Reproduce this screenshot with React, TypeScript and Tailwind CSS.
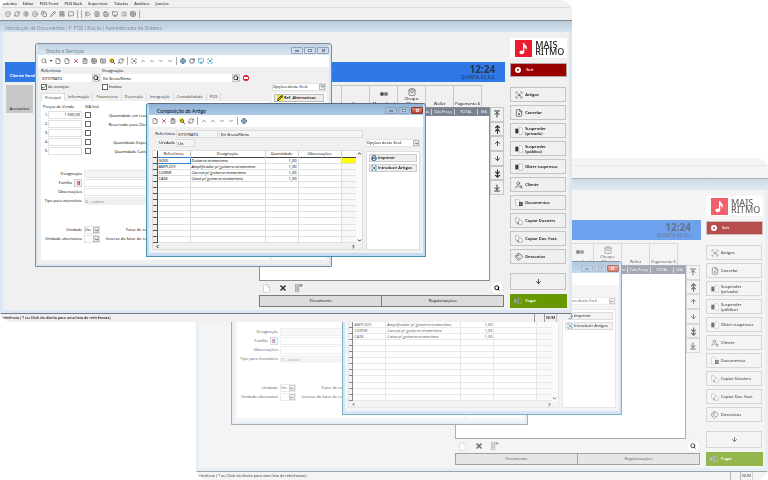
import React, { useId } from 'react';
import {
  ArrowDown, ArrowDownToLine, ArrowUp, ArrowUpToLine, CheckCircle, ChevronDown, ChevronUp, CircleDot,
  ClipboardList, Copy, FileText, File, FileX, Globe, Keyboard, LayoutGrid, MessageSquare,
  Monitor, Pencil, Printer, RefreshCw, RotateCw, Save, ScanSearch, Search, Settings, ShoppingBag,
  StepForward, Table, UserSearch, X, List, Check, Tags,
} from 'lucide-react';

type Icon = React.ElementType;

const menus = ['Sistema', 'Editar', 'POS Front', 'POS Back', 'Supervisor', 'Tabelas', 'Análises', 'Janelas'];
const mainTools: Icon[] = [CheckCircle, RefreshCw, Settings, CircleDot, Copy, Pencil, LayoutGrid, MessageSquare];
const sideTools: Icon[] = [StepForward, FileText, Save, Monitor, List, Table];

const payments = ['Numerário', 'Multibanco', 'Visa', 'MasterCard', 'Cheque Oferta', 'Wallet', 'Pagamento 6'];
const tabs = ['Informação', 'Financeiros', 'Descrição', 'Integração', 'Contabilidade', 'POS'];

const actions: { label: string; icon: Icon }[] = [
  { label: 'Artigos', icon: ScanSearch },
  { label: 'Cancelar', icon: FileX },
  { label: 'Suspender (privado)', icon: SuspendIcon },
  { label: 'Suspender (público)', icon: SuspendIcon },
  { label: 'Obter suspensos', icon: SuspendIcon },
  { label: 'Cliente', icon: UserSearch },
  { label: 'Documentos', icon: DocumentsIcon },
  { label: 'Copiar Dossiers', icon: CopyIcon },
  { label: 'Copiar Doc. Fact.', icon: CopyIcon },
  { label: 'Descontos', icon: Tags },
];

const items = [
  { ref: 'G005', name: 'Guitarra stratoritmo', qty: '1,00' },
  { ref: 'AMPLIDV', name: 'Amplificador p/ guitarra stratoritmo', qty: '1,00' },
  { ref: 'CORSR', name: 'Correia p/ guitarra stratoritmo', qty: '1,00' },
  { ref: 'CASE', name: 'Caixa p/ guitarra stratoritmo', qty: '1,00' },
];

function SuspendIcon({ className }: { className?: string }) {
  return (
    <svg viewBox="0 0 24 24" className={className} fill="none">
      <path d="M1 5h9v14H1z" fill="#333" />
      <path d="M12 2h7l4 4v16H12z" fill="#fafafa" stroke="#999" strokeWidth="1.5" />
    </svg>
  );
}

function DocumentsIcon({ className }: { className?: string }) {
  return (
    <svg viewBox="0 0 24 24" className={className} fill="none">
      <path d="M2 1h8l4 4v16H2z" fill="#fafafa" stroke="#999" strokeWidth="1.5" />
      <path d="M12 9h11v12H12z" fill="#444" />
      <path d="M13 13h9M13 17h9M17 10v10" stroke="#aaa" />
    </svg>
  );
}

function CopyIcon({ className }: { className?: string }) {
  return (
    <svg viewBox="0 0 24 24" className={className} fill="none" stroke="#888" strokeWidth="1.6">
      <path d="M2 2h7l4 4v10H2z" fill="#fafafa" />
      <path d="M11 9h7l4 4v9H11z" fill="#fafafa" />
      <path d="M6 19h4M8 17l3 2-3 3" stroke="#555" />
    </svg>
  );
}

function PayIcon() {
  return (
    <svg viewBox="0 0 24 24" className="size-[8px]" fill="none">
      <path d="M1 4l7 8-7 8z" fill="#b0a9b8" />
      <path d="M8 3h8v18H8z" fill="#8b8b8b" />
      <path d="M16 4h4l3 3v14h-7" stroke="#a5ab9b" strokeWidth="2" />
    </svg>
  );
}

function ArrowDouble({ up = false }: { up?: boolean }) {
  return (
    <svg viewBox="0 0 24 24" className="size-[9px]" fill="none" stroke="#333" strokeWidth="3">
      {up ? <path d="M12 1v22M6 8l6-6 6 6M6 17l6-6 6 6" /> : <path d="M12 1v22M6 7l6 6 6-6M6 16l6 6 6-6" />}
    </svg>
  );
}

function YellowSearch() {
  return (
    <svg viewBox="0 0 24 24" className="size-[6px]" fill="none">
      <path d="M1 2h15v15H1z" fill="#f2d21c" />
      <circle cx="13" cy="12" r="6" stroke="#333" strokeWidth="3" />
      <path d="M17 17l6 6" stroke="#333" strokeWidth="4" />
    </svg>
  );
}

function Separator() {
  return <span className="h-[8px] w-px bg-[#aaaaaa]" />;
}

function Tool({ icon: I, label, className = 'text-[#555555]' }: { icon: Icon; label: string; className?: string }) {
  return (
    <button aria-label={label} className="flex w-[6px] justify-center">
      <I className={`size-[6px] shrink-0 ${className}`} strokeWidth={2.5} />
    </button>
  );
}

function WindowControls({ active = false }: { active?: boolean }) {
  const base = 'flex h-[7px] w-[12px] items-center justify-center rounded-[1px] border';
  const plain = 'border-[#8fa2b8] text-[#56677c]';
  return (
    <div className="flex gap-px">
      <button aria-label="Minimizar" className={`${base} ${plain}`}>
        <span className="h-[2px] w-[4px] border border-[#7a899b] bg-white" />
      </button>
      <button aria-label="Maximizar" className={`${base} ${plain}`}>
        <span className="h-[3px] w-[4px] border border-[#7a899b] bg-white" />
      </button>
      <button
        aria-label="Fechar"
        className={`${base} ${active ? 'border-[#8a3a2c] bg-linear-to-b from-[#dd8b79] to-[#c03a20] text-white' : plain}`}
      >
        <X className="size-[5px]" strokeWidth={5} />
      </button>
    </div>
  );
}

function Dropdown({ label, options, className = '' }: { label: string; options: string[]; className?: string }) {
  return (
    <div className={`relative flex h-[8px] border border-[#e2e2e2] bg-white ${className}`}>
      <select aria-label={label} className="w-full appearance-none leading-[6px]">
        {options.map((o) => <option key={o}>{o}</option>)}
      </select>
      <span className="pointer-events-none absolute inset-y-0 right-0 flex w-[6px] items-center justify-center border border-[#bbbbbb] bg-[#eeeeee]">
        <ChevronDown className="size-[5px] shrink-0" strokeWidth={3} />
      </span>
    </div>
  );
}

function Tick({ id, label, checked = false }: { id?: string; label?: string; checked?: boolean }) {
  return (
    <span className="relative flex size-[6px] shrink-0">
      <input
        id={id}
        type="checkbox"
        aria-label={label}
        defaultChecked={checked}
        className="size-[6px] appearance-none border border-[#666666] bg-white"
      />
      {checked && <Check className="pointer-events-none absolute inset-0 size-[6px] text-[#555555]" strokeWidth={4} />}
    </span>
  );
}

function StocksWindow() {
  const id = useId();
  return (
    <section className="absolute top-[11px] left-[32px] flex h-[224px] w-[297px] flex-col rounded-t-[3px] border border-[#7d8b9a] bg-[#dae7f5] px-[2px] pb-[2px]">
      <header className="flex h-[11px] shrink-0 items-center justify-between bg-linear-to-b from-[#c3d3e3] to-[#dae6f2] pt-[2px] pl-[8px] text-[#808890]">
        <h2 className="font-[Lato] text-[5px]">Stocks e Serviços</h2>
        <WindowControls />
      </header>
      <div className="flex h-[12px] shrink-0 items-center gap-[3px] bg-white px-[3px]">
        <Tool icon={Search} label="Procurar" />
        <span className="flex w-[2px] justify-center">▾</span>
        <Tool icon={File} label="Novo" />
        <Tool icon={File} label="Duplicar" />
        <Tool icon={X} label="Apagar" className="text-[#c00010]" />
        <Tool icon={ClipboardList} label="Lista" />
        <Tool icon={Table} label="Tabela" />
        <Tool icon={Keyboard} label="Teclado" />
        <Tool icon={YellowSearch} label="Pesquisa rápida" />
        <Tool icon={RefreshCw} label="Atualizar" />
        <Separator />
        <Tool icon={ScanSearch} label="Ver" />
        <Tool icon={ChevronUp} label="Primeiro" />
        <Tool icon={ChevronUp} label="Anterior" />
        <Tool icon={ChevronDown} label="Seguinte" />
        <Tool icon={ChevronDown} label="Último" />
        <Separator />
        <Tool icon={Globe} label="Web" className="text-[#21577f]" />
        <Tool icon={RotateCw} label="Repor" className="text-[#222222]" />
        <Tool icon={Monitor} label="Ecrã" className="text-[#2b8ac0]" />
        <Tool icon={ScanSearch} label="Inspecionar" className="text-[#1b7eb2]" />
      </div>

      <div className="flex min-h-0 flex-1 flex-col bg-[#f0f0f0] px-[3px] pt-px pb-[4px]">
        <div className="flex">
          <div className="w-[61px]">
            <label htmlFor={`${id}ref`} className="block">Referência</label>
            <div className="flex h-[8px] items-center">
              <input id={`${id}ref`} defaultValue="KITSTRATO" className="h-full w-[51px] bg-white px-px" />
              <button aria-label="Procurar referência" className="flex size-[8px] items-center justify-center border border-[#cccccc]">
                <Search className="size-[6px] shrink-0" strokeWidth={3} />
              </button>
            </div>
          </div>
          <div className="flex-1">
            <label htmlFor={`${id}name`} className="block">Designação</label>
            <div className="flex h-[8px] items-center">
              <input id={`${id}name`} defaultValue="Kit StratoRitmo" className="h-full w-[130px] bg-white px-px" />
              <button aria-label="Procurar designação" className="mr-[3px] flex size-[8px] items-center justify-center border border-[#cccccc]">
                <Search className="size-[6px] shrink-0" strokeWidth={3} />
              </button>
              <span className="flex size-[6px] items-center justify-center rounded-full bg-[#d8152a]">
                <span className="h-[2px] w-[4px] bg-white" />
              </span>
            </div>
          </div>
        </div>
        <div className="flex h-[9px] items-center">
          <div className="flex w-[61px] items-center gap-px">
            <Tick id={`${id}serv`} checked />
            <label htmlFor={`${id}serv`}>de serviços</label>
          </div>
          <div className="flex flex-1 items-center gap-px">
            <Tick id={`${id}off`} />
            <label htmlFor={`${id}off`}>Inativo</label>
          </div>
          <Dropdown label="Opções" options={['Opções deste Ecrã']} className="w-[54px]" />
        </div>

        <div className="flex min-h-0 flex-1 gap-[3px] pt-[2px]">
          <div className="flex min-w-0 flex-1 flex-col">
            <nav className="flex h-[8px] shrink-0 text-[#333333]">
              <button className="w-[24px] border border-b-0 border-[#dddddd] bg-white">Principal</button>
              {tabs.map((t) => (
                <button key={t} className="border-r border-[#dddddd] px-[3px]">{t}</button>
              ))}
            </nav>
            <div className="flex min-h-0 flex-1 flex-col bg-white px-[2px] pt-[3px]">
              <div className="flex">
                <table className="text-right">
                  <thead>
                    <tr className="h-[6px]">
                      <th colSpan={2} className="text-left font-medium">Preços de Venda</th>
                      <th className="pl-[3px] text-left font-medium">IVA Incl.</th>
                    </tr>
                  </thead>
                  <tbody>
                    {['1 500,00', '', '', '', ''].map((price, i) => (
                      <tr key={i} className="h-[9px]">
                        <td className="w-[5px]">{i + 1}.</td>
                        <td>
                          <input
                            aria-label={`Preço ${i + 1}`}
                            defaultValue={price}
                            className="block h-[8px] w-[34px] border border-[#e2e2e2] px-px text-right"
                          />
                        </td>
                        <td className="pl-[3px]"><Tick label={`IVA incluído ${i + 1}`} /></td>
                      </tr>
                    ))}
                  </tbody>
                </table>
                <div className="flex w-[54px] flex-col pt-[7px] text-right leading-[9px] whitespace-nowrap">
                  <span>Quantidade em receção</span>
                  <span>Reservado para Clientes</span>
                  <span className="mt-[9px]">Quantidade Esperada</span>
                  <span>Quantidade Cativada</span>
                </div>
              </div>

              <div className="mt-[14px] grid auto-rows-[8px] grid-cols-[39px_1fr] items-center gap-x-[2px] gap-y-px">
                <label htmlFor={`${id}d`} className="text-right">Designação</label>
                <input id={`${id}d`} className="h-full w-full border border-[#e8e8e8] bg-[#f5f5f5]" />
                <span className="flex items-center justify-end gap-[2px]">
                  <label htmlFor={`${id}f`}>Família</label>
                  <button aria-label="Escolher família" className="flex size-[8px] items-center justify-center border border-[#cccccc] bg-[#f0f0f0]">
                    <span className="h-[4px] w-[3px] border-r border-[#4b8acb] bg-[#ee7788]" />
                  </button>
                </span>
                <input id={`${id}f`} className="h-full w-full border border-[#e8e8e8]" />
                <label htmlFor={`${id}o`} className="text-right">Observações</label>
                <input id={`${id}o`} className="h-full w-full border border-[#e8e8e8]" />
                <label htmlFor={`${id}t`} className="text-right whitespace-nowrap">Tipo para inventário</label>
                <input id={`${id}t`} defaultValue="O – outros" className="h-full w-full bg-[#f0f0f0] px-px text-[#777777]" />
              </div>

              <div className="mt-[21px] grid auto-rows-[8px] grid-cols-[39px_16px_1fr] items-center gap-x-[2px] gap-y-px">
                <span className="text-right">Unidade</span>
                <Dropdown label="Unidade" options={['Un.']} />
                <span className="pl-[24px]">Fator de conversão</span>
                <span className="text-right whitespace-nowrap">Unidade alternativa</span>
                <Dropdown label="Unidade alternativa" options={['']} />
                <span className="pl-[4px]">Inverso do fator de conversão</span>
              </div>
            </div>
          </div>
          <aside className="w-[54px] bg-white px-[2px] pt-px">
            <button className="flex h-[8px] w-full items-center gap-px border border-[#bbbbbb] bg-[#eeeeee] px-[2px] font-semibold whitespace-nowrap">
              <Pencil className="size-[6px] bg-[#f0e820]" strokeWidth={3} />
              Ref. Alternativas
            </button>
          </aside>
        </div>
      </div>
    </section>
  );
}

function CompositionWindow() {
  const id = useId();
  const rows = Array.from({ length: 14 }, (_, i) => items[i]);
  return (
    <section className="absolute top-[71px] left-[143px] flex h-[154px] w-[280px] flex-col rounded-t-[3px] border border-[#4792ae] border-t-[#5d6d7d] bg-[#c5dcf2] px-[2px] pb-[3px]">
      <header className="flex h-[11px] shrink-0 items-center justify-between bg-linear-to-b from-[#91b2d5] to-[#aec9e7] pt-[2px] pl-[8px] text-[#111111]">
        <h2 className="font-[Lato] text-[5px]">Composição do Artigo</h2>
        <WindowControls active />
      </header>
      <div className="flex h-[12px] shrink-0 items-center gap-[3px] bg-white px-[3px]">
        <Tool icon={File} label="Novo" />
        <Tool icon={X} label="Apagar" className="text-[#c00010]" />
        <Tool icon={ClipboardList} label="Lista" />
        <Tool icon={YellowSearch} label="Pesquisa rápida" />
        <Tool icon={RefreshCw} label="Atualizar" />
        <Separator />
        <Tool icon={ChevronUp} label="Primeiro" />
        <Tool icon={ChevronUp} label="Anterior" />
        <Tool icon={ChevronDown} label="Seguinte" />
        <Tool icon={ChevronDown} label="Último" />
        <Separator />
        <Tool icon={Globe} label="Web" className="text-[#21577f]" />
      </div>

      <div className="flex min-h-0 flex-1 gap-[3px] bg-[#f0f0f0] px-[3px] pt-[3px] pb-[3px]">
        <div className="flex min-w-0 flex-1 flex-col">
          <div className="grid auto-rows-[8px] grid-cols-[23px_42px_1fr] items-center gap-x-px gap-y-px">
            <label htmlFor={`${id}r`} className="text-right">Referência</label>
            <input id={`${id}r`} defaultValue="KITSTRATO" className="h-full w-full border border-[#dddddd] bg-[#f5f5f5] px-px" />
            <input aria-label="Designação" defaultValue="Kit StratoRitmo" className="h-full w-full border border-[#dddddd] bg-[#f5f5f5] px-px" />
            <label htmlFor={`${id}u`} className="text-right">Unidade</label>
            <input id={`${id}u`} defaultValue="Un." className="h-full w-[19px] border border-[#dddddd] bg-[#f5f5f5] px-px" />
          </div>
          <div className="mt-[3px] flex min-h-0 flex-1 flex-col border border-[#dddddd]">
            <div className="flex min-h-0 flex-1 bg-white">
              <table className="h-full flex-1 table-fixed border-collapse leading-[5px]">
                <thead>
                  <tr className="h-[6px] border-b border-[#444444]">
                    <th className="w-[4px] border-r border-[#444444]" />
                    <th className="w-[33px] border-r border-[#cccccc] font-medium">Referência</th>
                    <th className="w-[75px] border-r border-[#cccccc] font-medium">Designação</th>
                    <th className="w-[33px] border-r border-[#cccccc] font-medium">Quantidade</th>
                    <th className="w-[43px] border-r border-[#cccccc] font-medium">Observações</th>
                    <th />
                  </tr>
                </thead>
                <tbody>
                  {rows.map((row, i) => (
                    <tr key={i} className="h-[6px] border-b border-[#e0e0e0]">
                      <td className="border-r border-b border-[#555555] bg-[#f0f0f0]" />
                      <td className={i === 0 ? 'border border-[#2f80cc] pl-px' : 'border-r border-[#dddddd] pl-px'}>{row?.ref}</td>
                      <td className="border-r border-[#dddddd] pl-px whitespace-nowrap italic">{row?.name}</td>
                      <td className="border-r border-[#dddddd] pr-px text-right">{row?.qty}</td>
                      <td className="border-r border-[#dddddd]" />
                      <td className={i === 0 ? 'bg-[#ffff00]' : 'bg-[#f8f8f8]'} />
                    </tr>
                  ))}
                </tbody>
              </table>
              <div className="flex w-[6px] flex-col items-center justify-between bg-[#fafafa]">
                <ChevronUp className="size-[5px]" strokeWidth={4} />
                <ChevronDown className="size-[5px]" strokeWidth={4} />
              </div>
            </div>
            <div className="flex h-[6px] shrink-0 items-center justify-between pr-[6px] pl-[2px]">
              <ChevronDown className="size-[5px] rotate-90" strokeWidth={4} />
              <ChevronDown className="size-[5px] -rotate-90" strokeWidth={4} />
            </div>
          </div>
        </div>
        <div className="flex w-[54px] flex-col gap-[4px] pt-[9px]">
          <Dropdown label="Opções" options={['Opções deste Ecrã']} />
          <div className="flex flex-1 flex-col gap-[2px] border border-[#dddddd] bg-white px-[2px] pt-[2px]">
            <button className="flex h-[8px] items-center gap-px border border-[#cccccc] bg-[#eeeeee] px-px font-semibold whitespace-nowrap">
              <Printer className="size-[6px] text-[#345f83]" strokeWidth={3} />
              Imprimir
            </button>
            <button className="flex h-[8px] items-center gap-px border border-[#cccccc] bg-[#eeeeee] px-px font-semibold whitespace-nowrap">
              <ScanSearch className="size-[6px] text-[#17648f]" strokeWidth={3} />
              Introduzir Artigos
            </button>
          </div>
        </div>
      </div>
    </section>
  );
}

function DocumentPanel() {
  const scroll = 'flex flex-1 items-center justify-center border border-[#c6c6c6] bg-[#f0f0f0]';
  return (
    <div className="flex w-[245px] flex-col">
      <div className="flex justify-end pr-[22px]">
        {payments.map((p) => (
          <button key={p} className="flex h-[22px] w-[28px] flex-col items-center justify-end border-t border-r border-[#c6c6c6] pb-px">
            {p === 'MasterCard' && (
              <span className="mb-[5px] flex">
                <i className="size-[4px] rounded-full bg-[#555555]" />
                <i className="size-[4px] rounded-full bg-[#777777]" />
              </span>
            )}
            {p === 'Cheque Oferta' && <ShoppingBag className="size-[8px] shrink-0 text-[#555555]" />}
            <span className="leading-[5px]">{p}</span>
          </button>
        ))}
      </div>
      <div className="flex h-[174px]">
        <div className="flex flex-1 flex-col border border-[#888c94] bg-white">
          <div className="flex h-[8px] shrink-0 items-center justify-end bg-[#7b8392] text-center text-white">
            <span className="w-[22px] border-l border-[#c8ccd2]">Desconto</span>
            <span className="w-[23px] border-l border-[#c8ccd2]">Tab.Preço</span>
            <span className="w-[23px] border-l border-[#c8ccd2]">TOTAL</span>
            <span className="w-[12px] border-l border-[#c8ccd2]">IVA</span>
          </div>
        </div>
        <div className="flex h-[88px] w-[14px] flex-col text-[#333333]">
          <button aria-label="Topo" className={scroll}><ArrowUpToLine className="size-[8px]" strokeWidth={3} /></button>
          <button aria-label="Página acima" className={scroll}><ArrowDouble up /></button>
          <button aria-label="Acima" className={scroll}><ArrowUp className="size-[7px]" strokeWidth={3} /></button>
          <button aria-label="Abaixo" className={scroll}><ArrowDown className="size-[7px]" strokeWidth={3} /></button>
          <button aria-label="Página abaixo" className={scroll}><ArrowDouble /></button>
          <button aria-label="Fundo" className={scroll}><ArrowDownToLine className="size-[8px]" strokeWidth={3} /></button>
        </div>
      </div>
      <div className="flex h-[14px] items-center gap-[8px] pl-[3px]">
        <button aria-label="Novo documento"><File className="size-[9px] fill-white text-[#999999]" strokeWidth={1} /></button>
        <button aria-label="Apagar linha"><X className="size-[8px] text-[#333333]" strokeWidth={5} /></button>
        <button aria-label="Detalhe">
          <svg viewBox="0 0 24 24" className="size-[8px]" fill="none" stroke="#777" strokeWidth="2">
            <path d="M1 1h10v22H1zM3 7h6M3 12h6M3 17h6" />
            <path d="M14 3h9M14 6h6" stroke="#555" strokeWidth="3" />
          </svg>
        </button>
        <button aria-label="Procurar" className="ml-auto flex h-full w-[14px] items-center justify-center rounded-full border border-[#e6e6e6] bg-white">
          <Search className="size-[6px]" strokeWidth={4} />
        </button>
      </div>
      <div className="flex h-[12px]">
        <button className="flex-1 border border-[#777b83] bg-[#dcdcdc]">Documento</button>
        <button className="flex-1 border border-l-0 border-[#777b83] bg-[#dcdcdc]">Regularizações</button>
      </div>
    </div>
  );
}

function ActionColumn() {
  return (
    <aside className="flex w-[57px] shrink-0 flex-col pt-[6px] font-semibold">
      <div className="flex h-[20px] items-center gap-[3px] bg-white pl-[5px]">
        <svg viewBox="0 0 17 17" className="size-[17px]">
          <path d="M0 0h17v17H0z" fill="#ed1c2e" />
          <ellipse cx="6.8" cy="12.3" rx="2.3" ry="1.9" fill="#fff" />
          <path d="M8 12.3V3h1.2c.2 2 2.8 2.6 2.8 4.8 0 1-.5 1.7-1 2.2.2-1.8-.8-2.500-1.700-2.800v5z" fill="#fff" />
        </svg>
        <p className="font-['Noto_Sans'] text-[9px] leading-[7px] font-medium text-[#222222]">MAIS<br />RITMO</p>
      </div>
      <button className="mt-[5px] flex h-[14px] items-center gap-[5px] border border-[#b9a5a5] bg-[#990000] pl-[4px] text-white">
        <span className="size-[6px] rounded-full border-2 border-white" />
        Sair
      </button>
      <div className="mt-[10px] mr-px flex flex-col gap-[3px]">
        {actions.map(({ label, icon: I }) => (
          <button key={label} className="flex h-[15px] items-center gap-[2px] border border-[#c4c4c4] pl-[4px] text-left leading-[5px]">
            <I className="size-[8px] shrink-0 text-[#444444]" />
            <span className="max-w-[37px]">{label}</span>
          </button>
        ))}
        <button aria-label="Mais opções" className="mt-[6px] flex h-[17px] items-center justify-center border border-[#c4c4c4]">
          <ArrowDown className="size-[7px] text-[#333333]" strokeWidth={3} />
        </button>
      </div>
      <button className="mt-[4px] flex h-[14px] items-center gap-[3px] bg-[#669900] pl-[4px] text-white">
        <PayIcon />
        Pagar
      </button>
    </aside>
  );
}

function PosScreen() {
  return (
    <div className="flex flex-col overflow-hidden rounded-xl bg-[#f0f0f0] font-['Open_Sans',sans-serif] text-[4px] leading-[6px] font-medium text-black">
      <nav className="flex h-[8px] items-center gap-[6px] border-b border-[#dcdcdc] pl-[2px]">
        {menus.map((m) => <button key={m}>{m}</button>)}
      </nav>
      <div className="flex h-[13px] items-center gap-[3px] border-b border-[#858b90] pl-[5px]">
        {mainTools.map((I, i) => <Tool key={i} icon={I} label={`Ferramenta ${i + 1}`} className="text-[#666666]" />)}
        <Separator />
        <Separator />
        {sideTools.map((I, i) => <Tool key={i} icon={I} label={`Atalho ${i + 1}`} className="text-[#666666]" />)}
        <Separator />
      </div>

      <header className="flex h-[11px] items-center bg-linear-to-b from-[#b9cad9] to-[#d5e2ef] pt-[2px] pl-[5px] text-[#8793a0]">
        <h1 className="font-[Lato] text-[5px]">Introdução de Documentos | F. FOZ | Balcão | Administrador de Sistema</h1>
      </header>
      <div className="border-x-[3px] border-b-[3px] border-[#dbe7f4]">
        <div className="relative flex h-[278px] gap-[5px] px-[2px]">
          <div className="flex min-w-0 flex-1 flex-col pt-[30px]">
            <div className="flex h-[20px] items-center justify-between bg-[#2f78e6] pr-[10px] pl-[5px]">
              <span className="pt-[7px] font-bold text-white">Cliente Genérico</span>
              <div className="text-right text-[#27344d]">
                <p className="text-[10px] leading-[10px] font-bold">12:24</p>
                <p className="text-[5px] leading-[6px] font-normal">QUINTA 02 JUL</p>
              </div>
            </div>
            <div className="mt-[3px] flex justify-between px-px">
              <button className="flex h-[28px] w-[27px] items-end justify-center bg-[#c8c8c8] pb-px">Acessórios</button>
              <DocumentPanel />
            </div>
          </div>
          <ActionColumn />
          <StocksWindow />
          <CompositionWindow />
        </div>
      </div>
      <footer className="flex h-[9px] items-center justify-between border-t border-[#777b80] pr-[15px] font-[Roboto] font-normal">
        <span>Referência ( ? ou Click da direita para uma lista de referências)</span>
        <span className="flex h-full">
          <span className="w-[11px] border-x border-[#999999]" />
          <span className="border-r border-[#c0c0c0] px-px pt-px">NUM</span>
        </span>
      </footer>
    </div>
  );
}

const App: React.FC = () => {
  return (
    <main className="grid grid-cols-1 bg-white">
      {/* Front screen, with a faded copy stepped down behind it */}
      <div className="z-10 col-start-1 row-start-1 w-[74.5%] self-start">
        <PosScreen />
      </div>
      <div className="col-start-1 row-start-1 mt-[158px] w-[74.5%] justify-self-end opacity-70">
        <PosScreen />
      </div>
    </main>
  );
};

export default App;
